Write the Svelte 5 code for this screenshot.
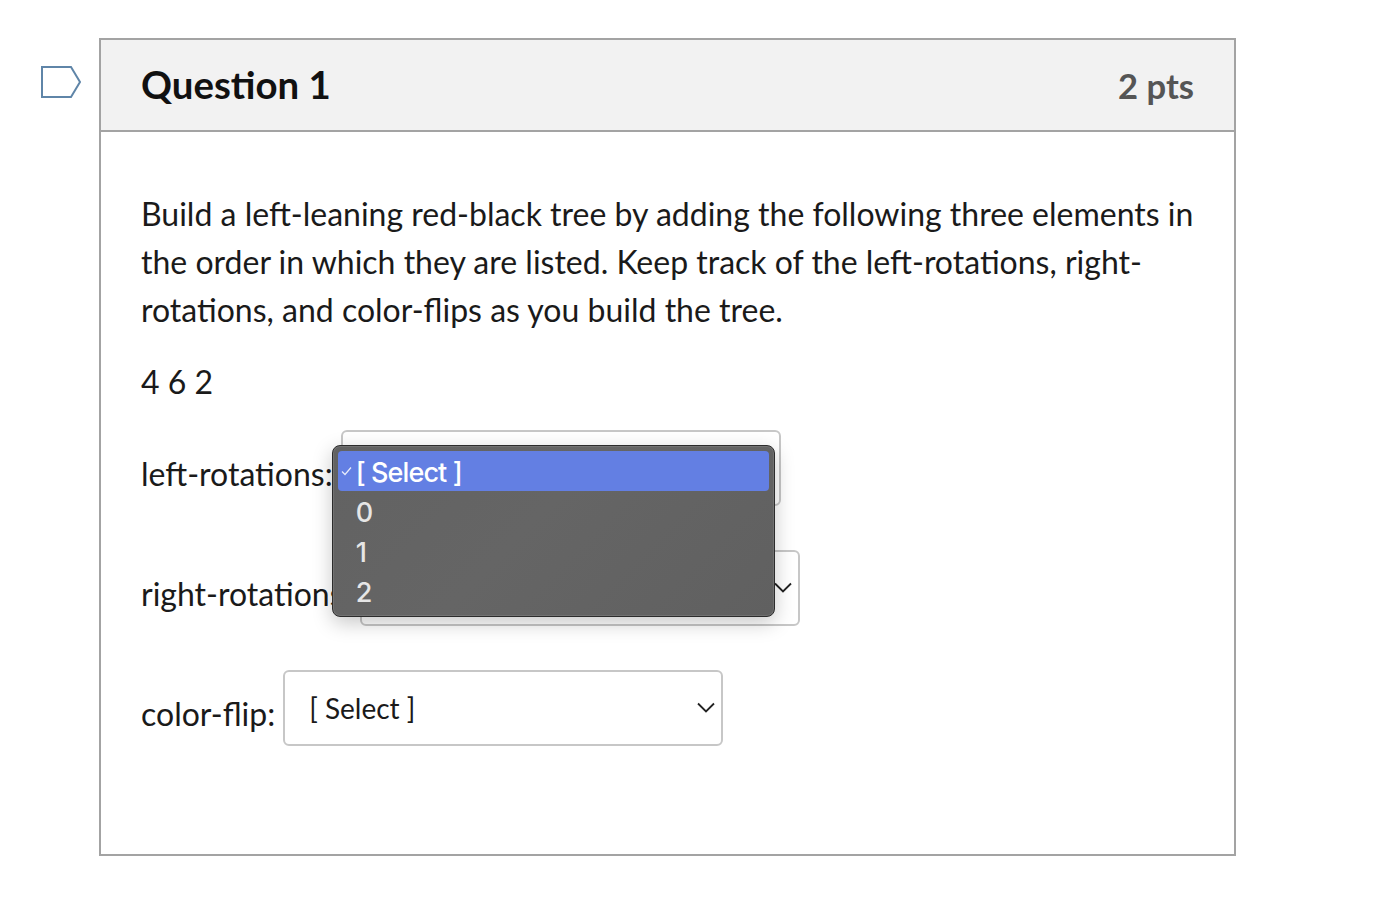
<script>
  const rows = [
    { label: 'left-rotations:', open: true },
    { label: 'right-rotations:', open: false },
    { label: 'color-flip:', open: false }
  ];
  const options = ['0', '1', '2'];
</script>

<main class="page">
  <svg class="flag" width="42" height="35" viewBox="0 0 42 35" aria-hidden="true">
    <path d="M2 3H31L40 18L31 33H2Z" fill="#fff" stroke="#5f85a8" stroke-width="2" />
  </svg>
  <section class="card">
    <header class="head">
      <h2>Question 1</h2>
      <span class="pts">2 pts</span>
    </header>
    <div class="body">
      <p class="text">Build a left-leaning red-black tree by adding the following three elements in the order in which they are listed. Keep track of the left-rotations, right-rotations, and color-flips as you build the tree.</p>
      <p class="nums">4 6 2</p>
      {#each rows as row}
        <div class="row">
          <span class="label">{row.label}</span>
          <div class="select">
            <span class="value">[ Select ]</span>
            <svg class="chev" width="18" height="12" viewBox="0 0 18 12" aria-hidden="true">
              <path d="M1 1.5L9 9.5L17 1.5" fill="none" stroke="#222" stroke-width="1.8" />
            </svg>
            {#if row.open}
              <div class="menu">
                <div class="opt active">
                  <svg class="tick" width="11" height="10" viewBox="0 0 11 10" aria-hidden="true">
                    <path d="M1 5.5L4 8.5L10 1.5" fill="none" stroke="#e8ecfb" stroke-width="1.2" />
                  </svg>
                  [ Select ]
                </div>
                {#each options as o}
                  <div class="opt">{o}</div>
                {/each}
              </div>
            {/if}
          </div>
        </div>
      {/each}
    </div>
  </section>
</main>

<style>
  :global(body) {
    margin: 0;
    background: #fff;
  }
  .page {
    display: flex;
    align-items: flex-start;
    padding: 38px 0 0 40px;
    height: 880px;
    box-sizing: border-box;
    font-family: Lato, "Open Sans", sans-serif;
    color: #1a1a1a;
  }
  .flag {
    flex: none;
    margin: 26px 17px 0 0;
  }
  .card {
    width: 1137px;
    height: 818px;
    box-sizing: border-box;
    border: 2px solid #a3a3a3;
    flex: none;
  }
  .head {
    display: flex;
    align-items: center;
    justify-content: space-between;
    height: 92px;
    box-sizing: border-box;
    padding: 0 40px;
    background: #f2f2f2;
    border-bottom: 2px solid #a3a3a3;
  }
  h2 {
    margin: 0 0 2px;
    font-size: 38.4px;
    font-weight: 700;
    color: #111;
  }
  .pts {
    font-size: 34.6px;
    font-weight: 700;
    color: #555;
  }
  .body {
    padding: 58px 40px 0;
    font-size: 32px;
    line-height: 48px;
  }
  .text {
    margin: 0;
  }
  .nums {
    margin: 24px 0 24px;
  }
  .row {
    display: flex;
    align-items: center;
    height: 76px;
    margin-bottom: 44px;
  }
  .label {
    margin: 12px 8px 0 0;
    white-space: nowrap;
  }
  .select {
    position: relative;
    width: 440px;
    height: 76px;
    box-sizing: border-box;
    display: flex;
    align-items: center;
    justify-content: space-between;
    padding: 0 6px 0 24px;
    border: 2px solid #c7c7c7;
    border-radius: 6px;
    background: #fff;
    font-size: 28px;
    flex: none;
  }
  .value {
    margin-top: -1px;
  }
  .menu {
    position: absolute;
    z-index: 2;
    top: 13px;
    left: -11px;
    width: 443px;
    height: 172px;
    box-sizing: border-box;
    padding: 5px 5px;
    border: 1px solid #2c2c2c;
    border-radius: 8px;
    background: linear-gradient(135deg, #626262, #656565 45%, #606060);
    box-shadow: 0 6px 20px rgba(0, 0, 0, 0.22), inset 0 0 0 1px rgba(255, 255, 255, 0.1);
    font-family: Inter, "Liberation Sans", Arial, sans-serif;
    font-size: 27px;
    font-weight: 500;
    line-height: 44px;
    color: #e6e6e6;
  }
  .opt {
    position: relative;
    height: 40px;
    padding-left: 18px;
    border-radius: 4px;
  }
  .active {
    background: #637fe3;
    color: #fff;
    letter-spacing: -0.9px;
    line-height: 43px;
  }
  .tick {
    position: absolute;
    left: 3px;
    top: 15px;
  }
</style>
